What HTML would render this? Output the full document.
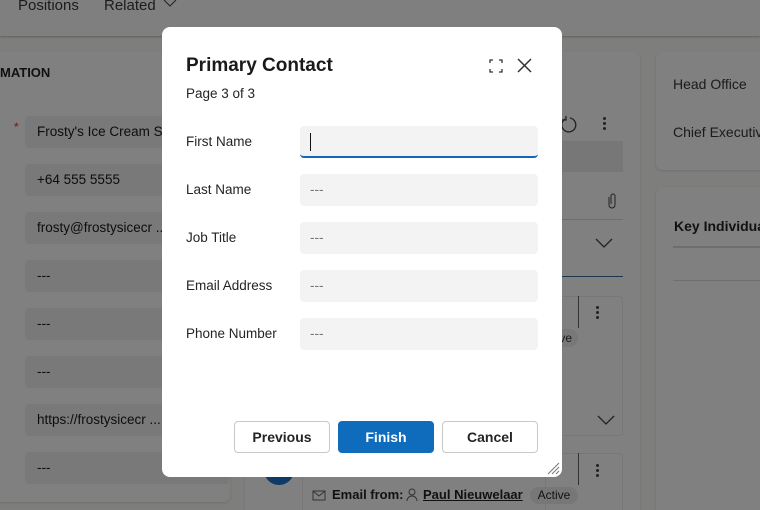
<!DOCTYPE html>
<html style="width:760px;height:510px;overflow:hidden"><head><style>
*{box-sizing:border-box;margin:0;padding:0}
body{width:760px;height:510px;overflow:hidden;background:#7e7e7d;font-family:"Liberation Sans",sans-serif;position:relative;color:#1a1a1a}
.a{position:absolute}
.card{position:absolute;background:#808080;border-radius:6px;box-shadow:0 1px 2px rgba(0,0,0,.12)}
.inp{position:absolute;background:#797979;border-radius:4px;font-size:13.5px;color:#0d0d0d;padding:0 12px;line-height:32px;height:32px;width:204px;left:25px;white-space:nowrap;overflow:hidden}
.dlg{position:absolute;left:162px;top:27px;width:400px;height:450px;background:#fff;border-radius:8px}
.lab{position:absolute;left:24px;font-size:13.5px;color:#242424}
.fi{position:absolute;left:138px;width:238px;height:32px;background:#f3f3f3;border-radius:4px;font-size:13.5px;color:#777;padding-left:10px;line-height:32px}
.btn{position:absolute;top:394px;width:96px;height:32px;border:1px solid #c8c8c8;border-radius:4px;font-size:14px;font-weight:600;text-align:center;line-height:30px;background:#fff;color:#242424}
</style></head><body>
<div class="a" style="left:0;top:0;width:760px;height:36px;background:#7f7f7f;box-shadow:0 1px 2px rgba(0,0,0,.25)"></div>
<div class="a" style="left:18px;top:-3px;font-size:15px;color:#1c1c1c">Positions</div>
<div class="a" style="left:104px;top:-3px;font-size:15px;color:#1c1c1c">Related</div>
<svg class="a" style="left:163px;top:0" width="14" height="8"><path d="M1 0 L7 6 L13 0" stroke="#222" fill="none"/></svg>

<div class="card" style="left:-10px;top:52px;width:240px;height:450px"></div>
<div class="a" style="left:0;top:65px;font-size:13px;font-weight:600;color:#111">MATION</div>
<div class="a" style="left:14px;top:120px;color:#7a1010;font-size:12px">*</div>
<div class="inp" style="top:116px">Frosty's Ice Cream S</div>
<div class="inp" style="top:164px">+64 555 5555</div>
<div class="inp" style="top:212px">frosty@frostysicecr ...</div>
<div class="inp" style="top:260px">---</div>
<div class="inp" style="top:308px">---</div>
<div class="inp" style="top:356px">---</div>
<div class="inp" style="top:404px">https://frostysicecr ...</div>
<div class="inp" style="top:452px">---</div>

<div class="card" style="left:245px;top:52px;width:395px;height:470px"></div>
<div class="a" style="left:302px;top:52px;width:1px;height:460px;background:#777"></div>
<svg class="a" style="left:560px;top:115px" width="20" height="20"><path d="M5 4 A7 7 0 1 0 10 3" stroke="#222" fill="none" stroke-width="1.3"/><path d="M6 1 L6 5 L2 5" stroke="#222" fill="none" stroke-width="1.3"/></svg>
<div class="a" style="left:603px;top:117px;width:3px;height:3px;background:#222;border-radius:50%;box-shadow:0 5px #222,0 10px #222"></div>
<div class="a" style="left:560px;top:141px;width:63px;height:31px;background:#777"></div>
<svg class="a" style="left:606px;top:193px" width="12" height="16"><path d="M3 4 V12 A3 3 0 0 0 9 12 V3 A2 2 0 0 0 5 3 V11" stroke="#222" fill="none"/></svg>
<div class="a" style="left:560px;top:219px;width:63px;height:1px;background:#6e6e6e"></div>
<svg class="a" style="left:595px;top:238px" width="18" height="10"><path d="M1 1 L9 9 L17 1" stroke="#222" fill="none" stroke-width="1.3"/></svg>
<div class="a" style="left:560px;top:276px;width:63px;height:1px;background:#1f3550"></div>
<div class="a" style="left:545px;top:296px;width:78px;height:140px;border:1px solid #777;border-radius:4px"></div>
<div class="a" style="left:578px;top:296px;width:1px;height:32px;background:#333"></div>
<div class="a" style="left:596px;top:306px;width:3px;height:3px;background:#222;border-radius:50%;box-shadow:0 5px #222,0 10px #222"></div>
<div class="a" style="left:550px;top:329px;width:28px;height:18px;background:#787878;border-radius:9px;font-size:12px;line-height:18px;text-align:right;padding-right:6px">ve</div>
<svg class="a" style="left:597px;top:415px" width="18" height="10"><path d="M1 1 L9 9 L17 1" stroke="#222" fill="none" stroke-width="1.3"/></svg>
<div class="a" style="left:545px;top:453px;width:78px;height:70px;border:1px solid #777;border-radius:4px"></div>
<div class="a" style="left:578px;top:453px;width:1px;height:32px;background:#333"></div>
<div class="a" style="left:596px;top:464px;width:3px;height:3px;background:#222;border-radius:50%;box-shadow:0 5px #222,0 10px #222"></div>
<div class="a" style="left:264px;top:455px;width:30px;height:30px;background:#0d3a66;border-radius:50%"></div>
<svg class="a" style="left:312px;top:489px" width="16" height="13"><rect x="1" y="2" width="12" height="9" stroke="#333" fill="none"/><path d="M1 2 L7 7 L13 2" stroke="#333" fill="none"/></svg>
<div class="a" style="left:332px;top:487px;font-size:13px;font-weight:600;color:#111">Email from:</div>
<svg class="a" style="left:406px;top:488px" width="12" height="14"><circle cx="6" cy="4" r="3" stroke="#333" fill="none"/><path d="M1 13 A5 5 0 0 1 11 13" stroke="#333" fill="none"/></svg>
<div class="a" style="left:423px;top:487px;font-size:13px;font-weight:600;color:#111;text-decoration:underline">Paul Nieuwelaar</div>
<div class="a" style="left:530px;top:487px;width:48px;height:17px;background:#777;border-radius:9px;font-size:12px;line-height:17px;text-align:center;color:#111">Active</div>

<div class="card" style="left:656px;top:52px;width:120px;height:118px"></div>
<div class="a" style="left:673px;top:76px;font-size:14px;color:#1a1a1a">Head Office</div>
<div class="a" style="left:673px;top:124px;font-size:14px;color:#1a1a1a;white-space:nowrap">Chief Executive</div>
<div class="card" style="left:656px;top:187px;width:120px;height:340px"></div>
<div class="a" style="left:674px;top:218px;font-size:14px;font-weight:600;color:#111;white-space:nowrap">Key Individua</div>
<div class="a" style="left:673px;top:246px;width:90px;height:2px;background:#6e6e6e"></div>
<div class="a" style="left:673px;top:280px;width:90px;height:1px;background:#6e6e6e"></div>

<div class="dlg">
<div class="a" style="left:24px;top:28px;font-size:19px;font-weight:600;color:#1a1a1a">Primary Contact</div>
<div class="a" style="left:24px;top:59px;font-size:13.5px;color:#242424">Page 3 of 3</div>
<svg class="a" style="left:327px;top:32px" width="14" height="14"><path d="M1 4 V1 H4 M10 1 H13 V4 M13 10 V13 H10 M4 13 H1 V10" stroke="#333" fill="none" stroke-width="1.3"/></svg>
<svg class="a" style="left:355px;top:31px" width="15" height="15"><path d="M1 1 L14 14 M14 1 L1 14" stroke="#333" fill="none" stroke-width="1.5"/></svg>
<div class="lab" style="top:107px">First Name</div>
<div class="fi" style="top:99px;background:#f3f3f3;border-bottom:2px solid #1565b8"><span style="display:inline-block;width:1px;height:18px;background:#111;vertical-align:middle"></span></div>
<div class="lab" style="top:155px">Last Name</div><div class="fi" style="top:147px">---</div>
<div class="lab" style="top:203px">Job Title</div><div class="fi" style="top:195px">---</div>
<div class="lab" style="top:251px">Email Address</div><div class="fi" style="top:243px">---</div>
<div class="lab" style="top:299px">Phone Number</div><div class="fi" style="top:291px">---</div>
<div class="btn" style="left:72px">Previous</div>
<div class="btn" style="left:176px;background:#0f6cbd;border-color:#0f6cbd;color:#fff">Finish</div>
<div class="btn" style="left:280px">Cancel</div>
<svg class="a" style="left:384px;top:434px" width="14" height="14"><path d="M2 13 L13 2 M6 13 L13 6 M10 13 L13 10" stroke="#777"/></svg>
</div>
</body></html>
